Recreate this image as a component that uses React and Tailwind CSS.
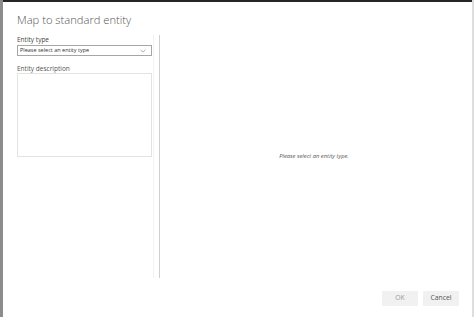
import React from 'react';

const font = { fontFamily: '"Open Sans", "Noto Sans", sans-serif' };

const App = () => {
  return (
    <div className="flex w-[474px] h-[317px] overflow-hidden bg-white" style={font}>
      <div className="w-[3px] bg-[#8c8c8c]" />
      <div className="flex-1 flex flex-col border-t-[2px] border-[#262626]">
        <h1 className="pl-[14px] pt-[9px] h-[33px] text-[11.2px] font-light text-[#555] leading-[18px]">
          Map to standard entity
        </h1>

        <div className="flex h-[243px]">
          <div className="w-[157px] flex border-r border-[#cfcfcf]">
            <div className="ml-[14px] w-[137px] border-r border-[#f2f2f2] pt-[1px]">
              <label className="block text-[6.5px] leading-[8px] text-[#444]">Entity type</label>
              <div className="mt-[1px] w-[135px] h-[11px] border border-[#a6a6a6] flex items-center justify-between px-[2px]">
                <span className="text-[5.5px] leading-none text-[#333]">Please select an entity type</span>
                <svg width="6" height="4" viewBox="0 0 6 4" className="mr-[3px]">
                  <path d="M0.5 0.8 L3 3.2 L5.5 0.8" fill="none" stroke="#888" strokeWidth="0.7" />
                </svg>
              </div>
              <label className="block mt-[9px] text-[6.5px] leading-[8px] text-[#555]">Entity description</label>
              <div className="w-[135px] h-[84px] border border-[#e3e3e3]" />
            </div>
          </div>
          <div className="flex-1 flex items-center justify-center pr-[4px]">
            <span className="italic text-[5.8px] text-[#555]">Please select an entity type.</span>
          </div>
        </div>

        <div className="flex justify-end gap-[5px] pr-[13px] pt-[13px]">
          <button className="w-[36px] h-[15px] bg-[#f1f1f1] text-[#9a9a9a] text-[6.8px]">OK</button>
          <button className="w-[36px] h-[15px] bg-[#f1f1f1] text-[#555] text-[6.8px]">Cancel</button>
        </div>
      </div>
      <div className="w-[2px] bg-[#dedede]" />
    </div>
  );
};

export default App;
